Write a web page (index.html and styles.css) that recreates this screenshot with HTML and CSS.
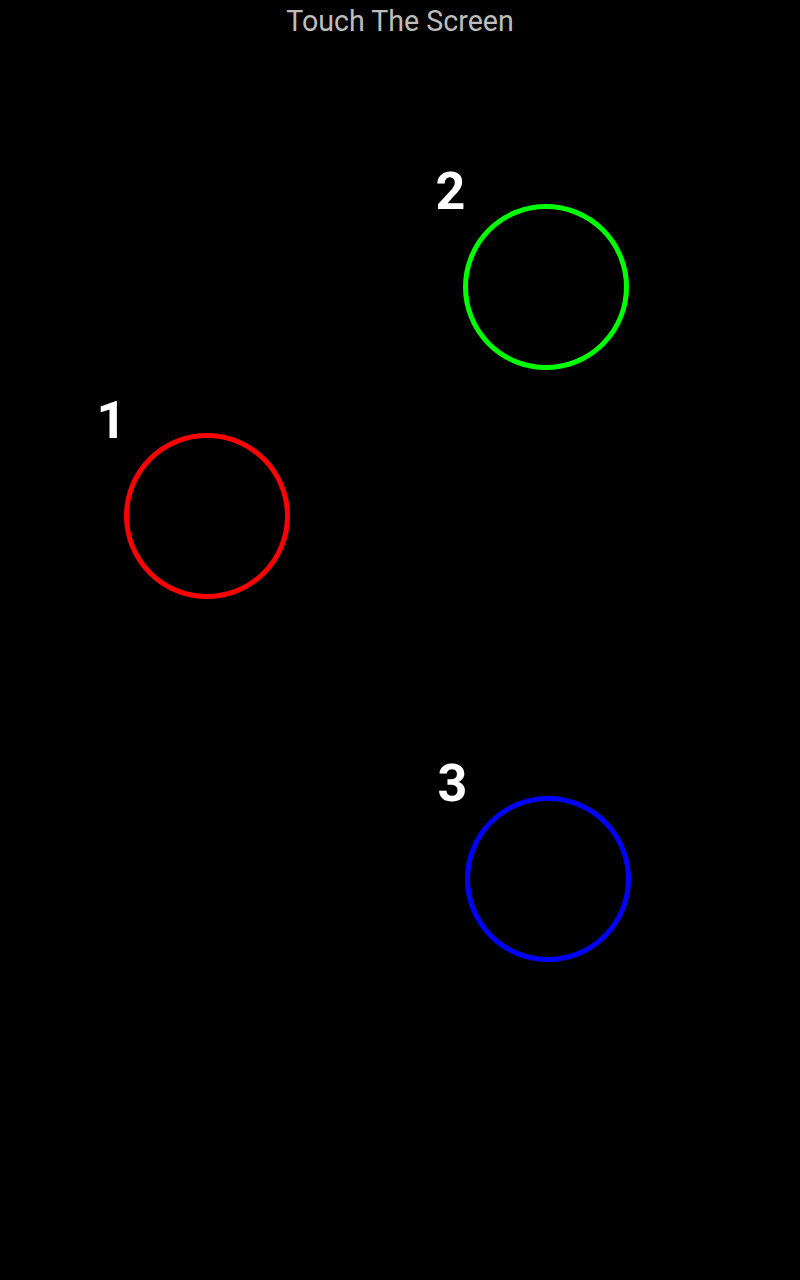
FILE: index.html
```html
<!DOCTYPE html>
<html lang="en">
<head>
<meta charset="utf-8">
<title>Touch The Screen</title>
<link rel="stylesheet" href="styles.css">
</head>
<body>
<main class="screen">
  <h1 class="title">Touch The Screen</h1>
  <div class="touch touch-red p1"><span class="label">1</span></div>
  <div class="touch touch-green p2"><span class="label">2</span></div>
  <div class="touch touch-blue p3"><span class="label">3</span></div>
</main>
</body>
</html>
```
FILE: styles.css
```css
html, body {
  margin: 0;
  padding: 0;
  background: #000;
}
.screen {
  position: relative;
  width: 800px;
  height: 1280px;
  background: #000;
  overflow: hidden;
  font-family: Roboto, "Liberation Sans", sans-serif;
}
.title {
  margin: 0;
  padding-top: 3.5px;
  text-align: center;
  font-size: 28.6px;
  font-weight: 400;
  line-height: normal;
  color: #bdbdbd;
}
.touch {
  position: absolute;
  width: 166px;
  height: 166px;
  box-sizing: border-box;
  border: 5px solid;
  border-radius: 50%;
}
.touch-red { border-color: #ff0000; }
.touch-green { border-color: #00ff00; }
.touch-blue { border-color: #0000ff; }
.p1 { left: 124px; top: 433px; }
.p2 { left: 463px; top: 204px; }
.p3 { left: 465px; top: 796px; }
.label {
  position: absolute;
  left: -32.5px;
  top: -43px;
  font-size: 52px;
  font-weight: 700;
  line-height: 1;
  color: #fff;
}
```
